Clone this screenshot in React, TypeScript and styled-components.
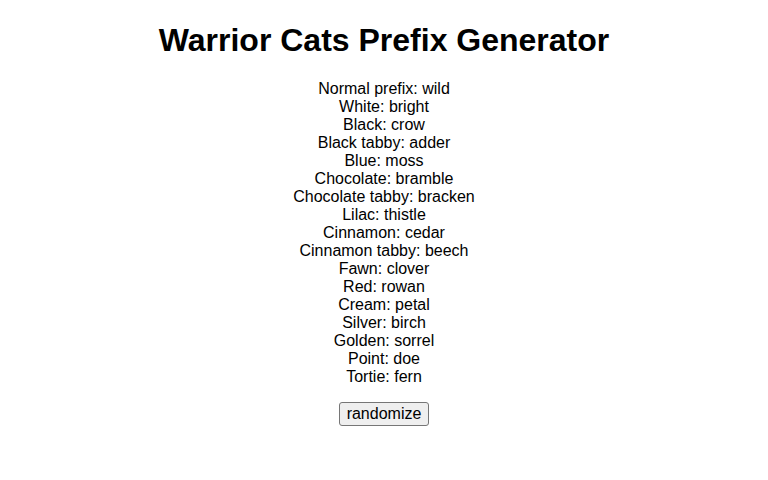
import React, { useState } from "react";
import styled, { createGlobalStyle } from "styled-components";

const GlobalStyle = createGlobalStyle`
  body {
    margin: 0;
    background: #ffffff;
    color: #000000;
    font-family: "Liberation Sans", Arial, sans-serif;
  }
`;

const Page = styled.main`
  display: flex;
  flex-direction: column;
  align-items: center;
  padding-top: 22px;
`;

const Title = styled.h1`
  margin: 0 0 21px 0;
  font-size: 32px;
  line-height: 37px;
  font-weight: bold;
`;

const PrefixList = styled.div`
  display: flex;
  flex-direction: column;
  align-items: center;
  font-size: 16px;
  line-height: 18px;
`;

const PrefixRow = styled.div`
  text-align: center;
`;

const RandomizeButton = styled.button`
  margin-top: 16px;
  height: 24px;
  padding: 0 7px;
  font-family: "Liberation Sans", Arial, sans-serif;
  font-size: 16px;
  color: #000000;
  background: #efefef;
  border: 1px solid #767676;
  border-radius: 3px;
  cursor: pointer;
  &:hover {
    background: #e5e5e5;
  }
`;

const pools: Record<string, string[]> = {
  "Normal prefix": ["wild", "swift", "thorn", "storm", "dark"],
  White: ["bright", "snow", "frost", "cloud"],
  Black: ["crow", "night", "raven", "coal"],
  "Black tabby": ["adder", "shadow", "smoke"],
  Blue: ["moss", "ash", "mist"],
  Chocolate: ["bramble", "mud", "oak"],
  "Chocolate tabby": ["bracken", "bark", "hazel"],
  Lilac: ["thistle", "dove", "heather"],
  Cinnamon: ["cedar", "rust", "ember"],
  "Cinnamon tabby": ["beech", "fox", "leaf"],
  Fawn: ["clover", "sand", "dusk"],
  Red: ["rowan", "fire", "flame"],
  Cream: ["petal", "honey", "dawn"],
  Silver: ["birch", "silver", "pebble"],
  Golden: ["sorrel", "sun", "lion"],
  Point: ["doe", "fawn", "hare"],
  Tortie: ["fern", "dapple", "spotted"],
};

const initial: Record<string, string> = Object.fromEntries(
  Object.entries(pools).map(([k, v]) => [k, v[0]])
);

const pick = (list: string[]) => list[Math.floor(Math.random() * list.length)];

const App = () => {
  const [prefixes, setPrefixes] = useState(initial);

  const randomize = () => {
    setPrefixes(
      Object.fromEntries(Object.entries(pools).map(([k, v]) => [k, pick(v)]))
    );
  };

  return (
    <>
      <GlobalStyle />
      <Page>
        <Title>Warrior Cats Prefix Generator</Title>
        <PrefixList>
          {Object.entries(prefixes).map(([label, value]) => (
            <PrefixRow key={label}>
              {label}: {value}
            </PrefixRow>
          ))}
        </PrefixList>
        <RandomizeButton onClick={randomize}>randomize</RandomizeButton>
      </Page>
    </>
  );
};

export default App;
